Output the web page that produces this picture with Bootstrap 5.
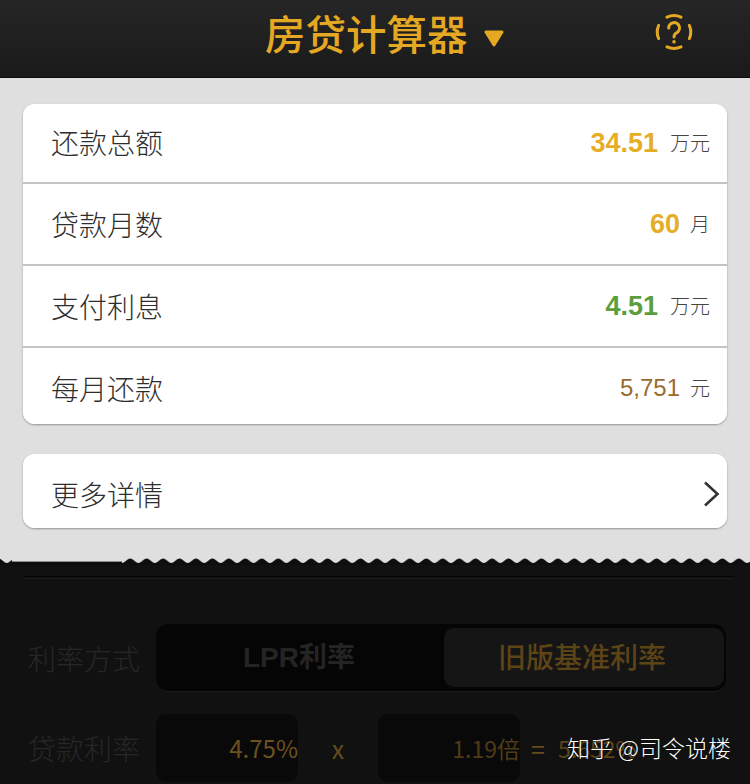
<!doctype html>
<html lang="zh">
<head>
<meta charset="utf-8">
<title>房贷计算器</title>
<link href="https://cdn.jsdelivr.net/npm/bootstrap@5.3.0/dist/css/bootstrap.min.css" rel="stylesheet">
<style>
html,body{height:784px;overflow:hidden}
body{background:#111;font-family:"Liberation Sans","Noto Sans CJK SC",sans-serif;position:relative;width:750px}
.cjk{font-family:"Noto Sans CJK SC","Liberation Sans",sans-serif}
.topbar{height:78px;padding:0;background:linear-gradient(#262626,#1a1a1a);border-bottom:1px solid #0c0c0c}
.topbar-title{font-size:40.5px;line-height:1;color:#e5a823;font-weight:500;margin-left:265px;margin-top:-11px}
.caret-tri{margin-left:16px;margin-top:-1px}
.help-ico{margin-left:151px;margin-top:-14px}
.paper{background:#dfdfdf;height:487px;padding:26px 23px 0}
.sheet{border:0;border-radius:12px;box-shadow:0 1px 2px rgba(0,0,0,.35);overflow:hidden;margin-bottom:30px}
.sheet .list-group-item{border-color:#c4c4c4;border-width:0 0 2px;padding:0 19px 0 28px;color:#2e2e2e;font-size:28px;font-weight:300}
.rowa{height:80px}
.rowb{height:82px}
.rowc{height:76px;border-bottom:0!important}
.sheet .rowd{height:74px;padding:6px 7px 0 28px}
.sheet .rowc{padding-top:4px}
.lbl{line-height:1}
.lift{margin-bottom:2px}
.num{font-size:27px;font-weight:700;line-height:1}
.amber{color:#e5ae26}
.green{color:#5a9e40}
.brown{color:#9b6a2f;font-size:24px;font-weight:400}
.unit{font-size:20px;color:#444;width:38px;margin-left:12px;line-height:1;white-space:nowrap;flex:none}
.unit-short{width:18px;margin-left:10px}
.wave{display:block;height:8px;margin-top:-8px;position:relative}
.dark{padding:11px 16px 0 24px}
.rule{height:3px;border-top:1px solid #050505;border-bottom:1px solid #1b1b1b;margin-bottom:45px}
.form-lbl{font-size:28px;color:#272727;font-weight:300;width:132px;padding-left:4px;line-height:1}
.seg{width:570px;height:68px;background:#050505;border-radius:12px;padding:4px 2px 4px 0;border-bottom:1px solid #1c1c1c}
.seg-item{font-size:28px;font-weight:500;line-height:1;border-radius:10px}
.seg-off{width:286px;color:#242424;font-family:"Liberation Sans","Noto Sans CJK SC",sans-serif;font-weight:700;margin-right:2px}
.seg-on{width:280px;color:#5d4417;background:#151515;padding:0 4px 3px 0}
.calc-row{margin-top:22px}
.cell{width:142px;height:68px;background:#090909;border-radius:10px;line-height:1}
.v1{color:#6d5220;font-size:24px}
.v2{color:#4f3c17;font-size:23px}
.op{font-size:25px;color:#664c1c;width:80px;text-align:center;line-height:1}
.eq{width:36px}
.res{font-size:23px;color:#5d4518;line-height:1;margin-left:2px}
.mark-zh{position:absolute;left:567px;top:735px;color:#fff;font-size:23px;line-height:1.1;font-weight:300;text-shadow:0 0 1px rgba(0,0,0,.5)}
</style>
</head>
<body>
<nav class="navbar topbar">
  <div class="d-flex align-items-center">
    <span class="topbar-title cjk">房贷计算器</span>
    <svg class="caret-tri" width="20" height="17" viewBox="0 0 20 17"><path d="M2 2H18L10 15Z" fill="#e5a823" stroke="#e5a823" stroke-width="3" stroke-linejoin="round"/></svg>
    <svg class="help-ico" width="38" height="38" viewBox="0 0 38 38" fill="none" stroke="#e5a823" stroke-linecap="round">
      <path stroke-width="3" d="M12 4.2A16.5 16.5 0 0 1 26 4.2M12 33.8A16.5 16.5 0 0 0 26 33.8M3.6 12.5A16.5 16.5 0 0 0 3.6 25.5M34.4 12.5A16.5 16.5 0 0 1 34.4 25.5"/>
      <path stroke-width="3" d="M13.7 15A5.4 5.4 0 1 1 21.6 19.8Q19 21.3 19 24"/>
      <path stroke-width="3.4" d="M19 28.8V28.9"/>
    </svg>
  </div>
</nav>
<main class="paper">
  <section class="card sheet">
    <ul class="list-group list-group-flush">
      <li class="list-group-item rowa d-flex align-items-center justify-content-between"><span class="lbl lift cjk">还款总额</span><span class="d-flex align-items-center"><span class="num amber">34.51</span><span class="unit cjk">万元</span></span></li>
      <li class="list-group-item rowb d-flex align-items-center justify-content-between"><span class="lbl cjk">贷款月数</span><span class="d-flex align-items-center"><span class="num amber">60</span><span class="unit unit-short cjk">月</span></span></li>
      <li class="list-group-item rowb d-flex align-items-center justify-content-between"><span class="lbl cjk">支付利息</span><span class="d-flex align-items-center"><span class="num green">4.51</span><span class="unit cjk">万元</span></span></li>
      <li class="list-group-item rowc d-flex align-items-center justify-content-between"><span class="lbl cjk">每月还款</span><span class="d-flex align-items-center"><span class="num brown">5,751</span><span class="unit unit-short cjk">元</span></span></li>
    </ul>
  </section>
  <section class="card sheet">
    <div class="list-group list-group-flush">
      <div class="list-group-item rowd d-flex align-items-center justify-content-between border-0"><span class="lbl cjk">更多详情</span>
        <svg width="17" height="26" viewBox="0 0 17 26" fill="none" stroke="#333" stroke-width="2.6"><path d="M2 1.5L14.5 13L2 24.5"/></svg>
      </div>
    </div>
  </section>
</main>
<svg class="wave" width="750" height="8" viewBox="0 0 750 8" aria-hidden="true">
  <defs>
    <pattern id="scallop" x="122" y="0" width="16.45" height="8" patternUnits="userSpaceOnUse">
      <path d="M0 6C3 6 5 1.5 8.2 1.5S13.4 6 16.45 6V8H0Z" fill="#0e0e0e"/>
    </pattern>
  </defs>
  <rect width="750" height="8" fill="url(#scallop)"/>
  <rect x="12" y="0" width="110" height="4" fill="#dfdfdf"/>
  <rect x="12" y="5" width="110" height="3" fill="#0e0e0e"/>
  <rect x="12" y="4" width="110" height="1" fill="#8c8c8c"/>
</svg>
<section class="dark cjk">
  <div class="rule"></div>
  <div class="d-flex align-items-center">
    <span class="form-lbl">利率方式</span>
    <div class="seg d-flex">
      <div class="seg-item seg-off d-flex align-items-center justify-content-center">LPR利率</div>
      <div class="seg-item seg-on d-flex align-items-center justify-content-center">旧版基准利率</div>
    </div>
  </div>
  <div class="d-flex align-items-center calc-row">
    <span class="form-lbl">贷款利率</span>
    <div class="cell v1 d-flex align-items-center justify-content-end">4.75%</div>
    <span class="op">x</span>
    <div class="cell v2 d-flex align-items-center justify-content-end">1.19倍</div>
    <span class="op eq">=</span>
    <span class="res">5.652%</span>
  </div>
</section>
<div class="mark-zh cjk">知乎 @司令说楼</div>
<script src="https://cdn.jsdelivr.net/npm/bootstrap@5.3.0/dist/js/bootstrap.bundle.min.js"></script>
</body>
</html>
